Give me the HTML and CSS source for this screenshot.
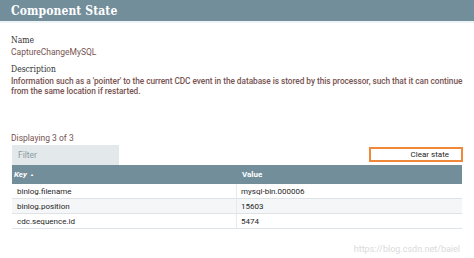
FILE: index.html
```html
<!DOCTYPE html>
<html>
<head>
<meta charset="utf-8">
<link rel="stylesheet" href="styles.css">
</head>
<body>
<div class="dialog">
  <div class="header"><span class="title">Component State</span></div>
  <div class="content">
    <div class="setting">
      <div class="label">Name</div>
      <div class="value">CaptureChangeMySQL</div>
    </div>
    <div class="setting desc">
      <div class="label">Description</div>
      <div class="value">Information such as a 'pointer' to the current CDC event in the database is stored by this processor, such that it can continue from the same location if restarted.</div>
    </div>
    <div class="count">Displaying 3 of 3</div>
    <div class="toolbar">
      <div class="filter">Filter</div>
      <div class="btn">Clear state</div>
    </div>
    <div class="table">
      <div class="row head">
        <div class="cell key">Key <span class="arrow">&#9650;</span></div>
        <div class="cell val">Value</div>
      </div>
      <div class="row">
        <div class="cell key">binlog.filename</div>
        <div class="cell val">mysql-bin.000006</div>
      </div>
      <div class="row alt">
        <div class="cell key">binlog.position</div>
        <div class="cell val">15603</div>
      </div>
      <div class="row">
        <div class="cell key">cdc.sequence.id</div>
        <div class="cell val">5474</div>
      </div>
    </div>
    <div class="watermark">https://blog.csdn.net/baiel</div>
  </div>
</div>
</body>
</html>
```
FILE: styles.css
```css
html, body {
  margin: 0;
  padding: 0;
  background: #ffffff;
}
body {
  width: 474px;
  height: 258px;
  overflow: hidden;
  font-family: Roboto, "Liberation Sans", sans-serif;
}
.header {
  height: 21px;
  background: #728e9b;
  border-bottom: 2px solid #eef3f5;
  padding-left: 11px;
  display: flex;
  align-items: center;
}
.title {
  font-family: "DejaVu Serif Condensed", "DejaVu Serif", serif;
  font-weight: bold;
  font-size: 12px;
  color: #ffffff;
  letter-spacing: 0.1px;
}
.content {
  padding: 0 10px 0 11px;
}
.setting {
  margin-top: 12px;
}
.setting.desc {
  margin-top: 7px;
}
.label {
  font-family: "DejaVu Serif Condensed", "DejaVu Serif", serif;
  font-size: 8.5px;
  line-height: 11px;
  color: #333333;
}
.value {
  font-size: 8.5px;
  line-height: 10px;
  color: #775351;
  margin-top: 1px;
}
.desc .value {
  font-weight: 500;
  font-size: 8.3px;
  letter-spacing: -0.05px;
  margin-top: 1px;
}
.count {
  margin-top: 37px;
  font-size: 8.5px;
  line-height: 11px;
  color: #775351;
}
.toolbar {
  margin-top: 1px;
  display: flex;
  justify-content: space-between;
  align-items: flex-start;
  padding-left: 1px;
  width: 451px;
}
.filter {
  width: 101px;
  height: 20px;
  background: #e3e8eb;
  color: #8a9ba3;
  font-size: 8.5px;
  line-height: 20px;
  padding-left: 6px;
}
.btn {
  margin-top: 2px;
  width: 78px;
  height: 11px;
  border: 2px solid #f0883a;
  font-size: 8px;
  line-height: 11px;
  color: #262626;
  text-align: right;
  padding-right: 12px;
  box-sizing: content-box;
}
.table {
  margin-left: 1px;
  width: 450px;
}
.row {
  display: grid;
  grid-template-columns: 225px 1fr;
  height: 15px;
  border-bottom: 1px solid #dde3e6;
  box-sizing: border-box;
  font-size: 8px;
  color: #262626;
}
.row.head {
  height: 19px;
  background: #728e9b;
  border-bottom: none;
  color: #ffffff;
  font-weight: bold;
}
.row.alt {
  background: #f4f6f7;
}
.cell {
  display: flex;
  align-items: center;
}
.row .key {
  padding-left: 5px;
  border-right: 1px solid #e6ebed;
}
.row .val {
  padding-left: 4px;
}
.row.head .key {
  font-style: italic;
  padding-left: 2px;
  border-right: none;
}
.row.head .val {
  padding-left: 5px;
}
.arrow {
  font-size: 4px;
  margin-left: 3px;
  font-style: normal;
}
.watermark {
  margin-top: 15px;
  text-align: right;
  padding-right: 4px;
  font-size: 9px;
  color: #dadada;
}
```
